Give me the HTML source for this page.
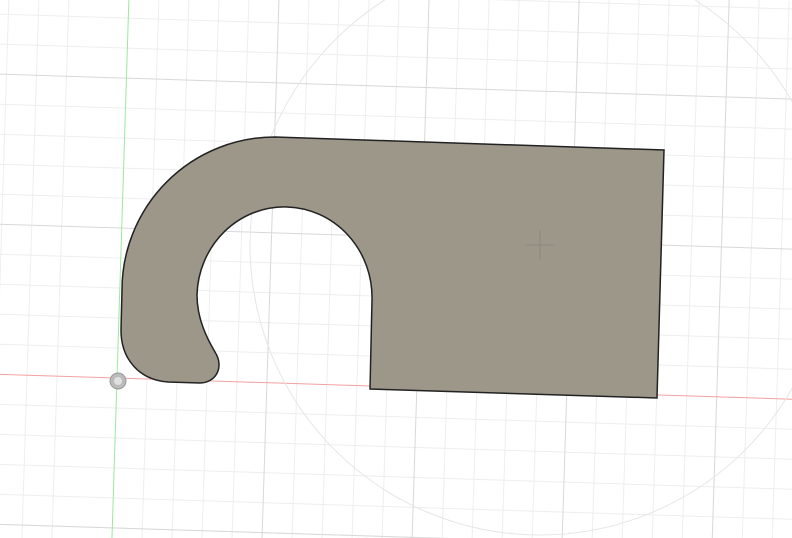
<!DOCTYPE html>
<html><head><style>html,body{margin:0;padding:0;background:#fff;overflow:hidden;width:792px;height:538px}svg{display:block;overflow:hidden}</style></head>
<body>
<svg width="792" height="538" viewBox="0 0 792 538" xmlns="http://www.w3.org/2000/svg" overflow="hidden">
<rect width="792" height="538" fill="#fff"/>
<g transform="rotate(1.8 117 378)">
<g stroke="#eeeeee" stroke-width="1">
<path d="M-20 18H800M-20 48H800M-20 108H800M-20 138H800M-20 168H800M-20 198H800M-20 258H800M-20 288H800M-20 318H800M-20 348H800M-20 408H800M-20 438H800M-20 468H800M-20 498H800M-20 528H800M-20 -12H800"/>
<path d="M-3 -20V560M27 -20V560M57 -20V560M147 -20V560M177 -20V560M207 -20V560M237 -20V560M297 -20V560M327 -20V560M357 -20V560M387 -20V560M447 -20V560M477 -20V560M507 -20V560M537 -20V560M597 -20V560M627 -20V560M657 -20V560M687 -20V560M747 -20V560M777 -20V560"/>
</g>
<g stroke="#d8d8d8" stroke-width="1">
<path d="M-20 78H800M-20 228H800M-20 528H800"/>
<path d="M267 -20V560M417 -20V560M567 -20V560M717 -20V560"/>
</g>
<path d="M-20 378H800" stroke="#f4a0a0" stroke-width="1"/>
<path d="M117 -20V560" stroke="#9ee89e" stroke-width="1"/>
</g>
<circle cx="540" cy="245" r="290" fill="none" stroke="#e6e6e6" stroke-width="1"/>
<path d="M275 137 L664 150 L657 398 L370 389 L372 300 A87 90 0 1 0 197 295 C197 320 208 340 215 352 C225 368 215 383 200 383 L168 382 C140 380 121 360 121 330 L122 290 A153 153 0 0 1 275 137 Z" fill="#9d978a" stroke="#222" stroke-width="1.5"/>
<path d="M540 230V260M525 245H555" stroke="#8f897d" stroke-width="1"/>
<circle cx="118" cy="381" r="8" fill="#bbb" stroke="#999"/>
<circle cx="118" cy="381" r="4" fill="#e0e0e0"/>
</svg>
</body></html>
